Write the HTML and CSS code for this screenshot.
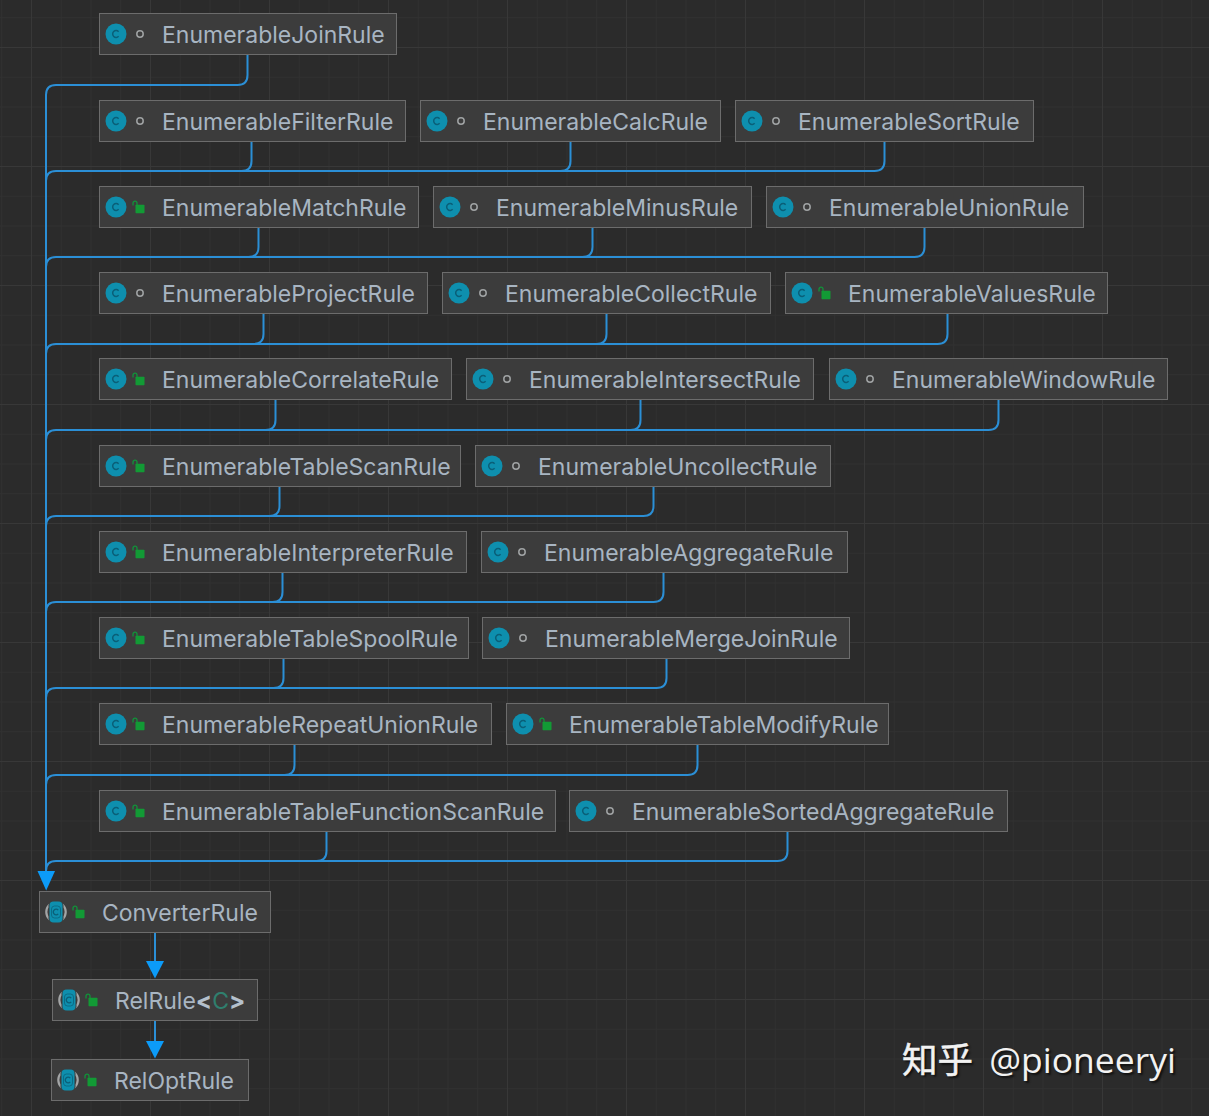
FILE: index.html
```html
<!DOCTYPE html>
<html lang="en">
<head>
<meta charset="utf-8">
<title>Enumerable rule hierarchy</title>
<link rel="stylesheet" href="styles.css">
</head>
<body>
<main class="canvas">
<svg class="defs" width="0" height="0" aria-hidden="true">
  <defs>
    <symbol id="cls" viewBox="0 0 22 22"><circle cx="11" cy="11" r="10.500" fill="#0e8fae"/><path d="M13.600 8.700a3.400 3.400 0 1 0 0 4.600" fill="none" stroke="#0a5f78" stroke-width="1.500"/></symbol>
    <symbol id="abs" viewBox="0 0 22 22"><circle cx="11" cy="11" r="9.700" fill="none" stroke="#a3a5a6" stroke-width="2.200"/><rect x="3.500" y="0" width="15" height="22" rx="4.500" fill="#3c3c3c"/><rect x="4.500" y="0.500" width="13" height="21" rx="4" fill="#0e8fae"/><rect x="6.500" y="5" width="9" height="12" rx="3" fill="none" stroke="#0b6c86" stroke-width="1"/><path d="M13.200 9.200a2.800 2.800 0 1 0 0 3.600" fill="none" stroke="#0a5f78" stroke-width="1.300"/></symbol>
    <symbol id="pkg" viewBox="0 0 14 14"><circle cx="8" cy="7" r="3.200" fill="none" stroke="#a0a3a4" stroke-width="1.500"/></symbol>
    <symbol id="pub" viewBox="0 0 14 14"><path d="M1 5.500V3.200a2 2 0 0 1 4 0V5" fill="none" stroke="#12923a" stroke-width="1.300"/><rect x="3.500" y="4.800" width="9" height="8.400" rx="0.600" fill="#129a35"/></symbol>
  </defs>
</svg>

<svg class="edges" viewBox="0 0 1209 1116" width="1209" height="1116" aria-hidden="true">
  <g class="edge">
    <path d="M46 95V876"/>
    <path d="M247.500 55V75Q247.500 85 237.500 85H56Q46 85 46 95"/>
    <path d="M884.500 141V161Q884.500 171 874.500 171H56Q46 171 46 181"/>
    <path d="M251.500 141V161Q251.500 171 241.500 171"/>
    <path d="M570.500 141V161Q570.500 171 560.500 171"/>
    <path d="M924.500 228V247Q924.500 257 914.500 257H56Q46 257 46 267"/>
    <path d="M258.500 228V247Q258.500 257 248.500 257"/>
    <path d="M592.500 228V247Q592.500 257 582.500 257"/>
    <path d="M947.500 314V334Q947.500 344 937.500 344H56Q46 344 46 354"/>
    <path d="M263.500 314V334Q263.500 344 253.500 344"/>
    <path d="M606.500 314V334Q606.500 344 596.500 344"/>
    <path d="M998.500 400V420Q998.500 430 988.500 430H56Q46 430 46 440"/>
    <path d="M275.500 400V420Q275.500 430 265.500 430"/>
    <path d="M640.500 400V420Q640.500 430 630.500 430"/>
    <path d="M653.500 487V506Q653.500 516 643.500 516H56Q46 516 46 526"/>
    <path d="M279.500 487V506Q279.500 516 269.500 516"/>
    <path d="M663.500 573V592Q663.500 602 653.500 602H56Q46 602 46 612"/>
    <path d="M282.500 573V592Q282.500 602 272.500 602"/>
    <path d="M666.500 659V678Q666.500 688 656.500 688H56Q46 688 46 698"/>
    <path d="M283.500 659V678Q283.500 688 273.500 688"/>
    <path d="M697.500 745V765Q697.500 775 687.500 775H56Q46 775 46 785"/>
    <path d="M294.500 745V765Q294.500 775 284.500 775"/>
    <path d="M787.500 831V851Q787.500 861 777.500 861H56Q46 861 46 871"/>
    <path d="M326.500 831V851Q326.500 861 316.500 861"/>
    <path d="M155 933V964"/>
    <path d="M155 1021V1044"/>
  </g>
  <g class="head">
    <path d="M37.500 871H55L46.200 890.500Z"/>
    <path d="M146 961H164L155 978.500Z"/>
    <path d="M146 1041H164L155 1058.500Z"/>
  </g>
</svg>

<div class="node" style="left:99px;top:13px;width:298px"><svg class="kind"><use href="#cls"/></svg><svg class="vis"><use href="#pkg"/></svg><span class="name">EnumerableJoinRule</span></div>

<div class="node" style="left:99px;top:100px;width:307px"><svg class="kind"><use href="#cls"/></svg><svg class="vis"><use href="#pkg"/></svg><span class="name">EnumerableFilterRule</span></div>
<div class="node" style="left:420px;top:100px;width:301px"><svg class="kind"><use href="#cls"/></svg><svg class="vis"><use href="#pkg"/></svg><span class="name">EnumerableCalcRule</span></div>
<div class="node" style="left:735px;top:100px;width:299px"><svg class="kind"><use href="#cls"/></svg><svg class="vis"><use href="#pkg"/></svg><span class="name">EnumerableSortRule</span></div>

<div class="node" style="left:99px;top:186px;width:320px"><svg class="kind"><use href="#cls"/></svg><svg class="vis"><use href="#pub"/></svg><span class="name">EnumerableMatchRule</span></div>
<div class="node" style="left:433px;top:186px;width:319px"><svg class="kind"><use href="#cls"/></svg><svg class="vis"><use href="#pkg"/></svg><span class="name">EnumerableMinusRule</span></div>
<div class="node" style="left:766px;top:186px;width:318px"><svg class="kind"><use href="#cls"/></svg><svg class="vis"><use href="#pkg"/></svg><span class="name">EnumerableUnionRule</span></div>

<div class="node" style="left:99px;top:272px;width:329px"><svg class="kind"><use href="#cls"/></svg><svg class="vis"><use href="#pkg"/></svg><span class="name">EnumerableProjectRule</span></div>
<div class="node" style="left:442px;top:272px;width:329px"><svg class="kind"><use href="#cls"/></svg><svg class="vis"><use href="#pkg"/></svg><span class="name">EnumerableCollectRule</span></div>
<div class="node" style="left:785px;top:272px;width:323px"><svg class="kind"><use href="#cls"/></svg><svg class="vis"><use href="#pub"/></svg><span class="name">EnumerableValuesRule</span></div>

<div class="node" style="left:99px;top:358px;width:353px"><svg class="kind"><use href="#cls"/></svg><svg class="vis"><use href="#pub"/></svg><span class="name">EnumerableCorrelateRule</span></div>
<div class="node" style="left:466px;top:358px;width:348px"><svg class="kind"><use href="#cls"/></svg><svg class="vis"><use href="#pkg"/></svg><span class="name">EnumerableIntersectRule</span></div>
<div class="node" style="left:829px;top:358px;width:339px"><svg class="kind"><use href="#cls"/></svg><svg class="vis"><use href="#pkg"/></svg><span class="name">EnumerableWindowRule</span></div>

<div class="node" style="left:99px;top:445px;width:362px"><svg class="kind"><use href="#cls"/></svg><svg class="vis"><use href="#pub"/></svg><span class="name">EnumerableTableScanRule</span></div>
<div class="node" style="left:475px;top:445px;width:356px"><svg class="kind"><use href="#cls"/></svg><svg class="vis"><use href="#pkg"/></svg><span class="name">EnumerableUncollectRule</span></div>

<div class="node" style="left:99px;top:531px;width:368px"><svg class="kind"><use href="#cls"/></svg><svg class="vis"><use href="#pub"/></svg><span class="name">EnumerableInterpreterRule</span></div>
<div class="node" style="left:481px;top:531px;width:367px"><svg class="kind"><use href="#cls"/></svg><svg class="vis"><use href="#pkg"/></svg><span class="name">EnumerableAggregateRule</span></div>

<div class="node" style="left:99px;top:617px;width:370px"><svg class="kind"><use href="#cls"/></svg><svg class="vis"><use href="#pub"/></svg><span class="name">EnumerableTableSpoolRule</span></div>
<div class="node" style="left:482px;top:617px;width:368px"><svg class="kind"><use href="#cls"/></svg><svg class="vis"><use href="#pkg"/></svg><span class="name">EnumerableMergeJoinRule</span></div>

<div class="node" style="left:99px;top:703px;width:393px"><svg class="kind"><use href="#cls"/></svg><svg class="vis"><use href="#pub"/></svg><span class="name">EnumerableRepeatUnionRule</span></div>
<div class="node" style="left:506px;top:703px;width:383px"><svg class="kind"><use href="#cls"/></svg><svg class="vis"><use href="#pub"/></svg><span class="name">EnumerableTableModifyRule</span></div>

<div class="node" style="left:99px;top:790px;width:457px"><svg class="kind"><use href="#cls"/></svg><svg class="vis"><use href="#pub"/></svg><span class="name">EnumerableTableFunctionScanRule</span></div>
<div class="node" style="left:569px;top:790px;width:439px"><svg class="kind"><use href="#cls"/></svg><svg class="vis"><use href="#pkg"/></svg><span class="name">EnumerableSortedAggregateRule</span></div>

<div class="node" style="left:39px;top:891px;width:232px"><svg class="kind"><use href="#abs"/></svg><svg class="vis"><use href="#pub"/></svg><span class="name">ConverterRule</span></div>
<div class="node" style="left:52px;top:979px;width:206px"><svg class="kind"><use href="#abs"/></svg><svg class="vis"><use href="#pub"/></svg><span class="name">RelRule<b class="angle">&lt;</b><span class="param">C</span><b class="angle">&gt;</b></span></div>
<div class="node" style="left:51px;top:1059px;width:198px"><svg class="kind"><use href="#abs"/></svg><svg class="vis"><use href="#pub"/></svg><span class="name">RelOptRule</span></div>

<p class="mark"><span class="mark-cjk">知乎</span> @pioneeryi</p>
</main>
</body>
</html>
```

FILE: styles.css
```css
html, body {
  margin: 0;
  padding: 0;
  background: #2b2b2b;
}

.canvas {
  position: relative;
  width: 1209px;
  height: 1116px;
  overflow: hidden;
  background-color: #2b2b2b;
  background-image:
    linear-gradient(to right, #383838 1px, transparent 1px),
    linear-gradient(to bottom, #383838 1px, transparent 1px),
    linear-gradient(to right, #313131 1px, transparent 1px),
    linear-gradient(to bottom, #313131 1px, transparent 1px);
  background-size: 119px 119px, 119px 119px, 29.75px 29.75px, 29.75px 29.75px;
  background-position: 31px 47px, 31px 47px, 31px 47px, 31px 47px;
}

.defs {
  position: absolute;
}

.edges {
  position: absolute;
  left: 0;
  top: 0;
}

.edge path {
  fill: none;
  stroke: #2b8fd6;
  stroke-width: 2;
}

.head path {
  fill: #0c9bf8;
}

.node {
  position: absolute;
  box-sizing: border-box;
  height: 42px;
  display: flex;
  align-items: center;
  padding-left: 5px;
  background: #3c3c3c;
  border: 1px solid #6c6c6c;
}

.kind {
  width: 22px;
  height: 22px;
  flex: none;
}

.vis {
  width: 14px;
  height: 14px;
  flex: none;
  margin-left: 5px;
}

.name {
  margin-left: 16px;
  margin-top: 2px;
  font-family: Inter, "Liberation Sans", sans-serif;
  font-size: 23px;
  line-height: 28px;
  color: #a8b5c2;
  white-space: nowrap;
}

.angle {
  font-size: 24px;
  font-weight: 700;
  color: #b4c0cc;
}

.param {
  color: #2f7f6e;
}

.mark {
  position: absolute;
  right: 33px;
  top: 1034px;
  margin: 0;
  font-family: "Open Sans", "Noto Sans CJK SC", sans-serif;
  font-size: 35.500px;
  line-height: 50px;
  word-spacing: 7px;
  color: #f2f2f2;
  text-shadow: 2px 2px 2px #111;
  white-space: nowrap;
}

.mark-cjk {
  -webkit-text-stroke: 0.5px #f2f2f2;
}
```
